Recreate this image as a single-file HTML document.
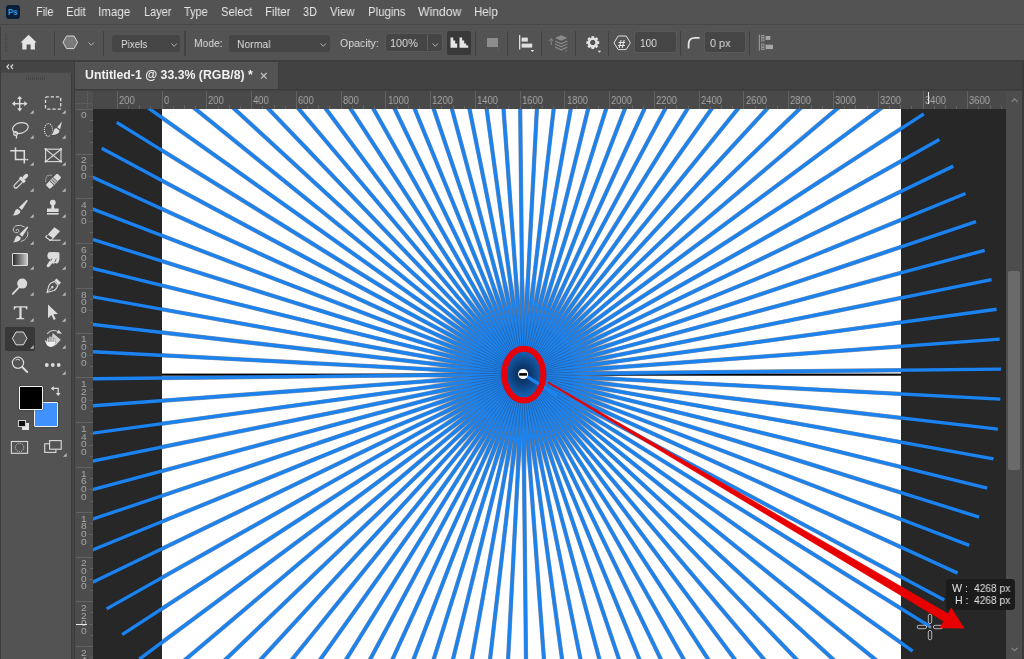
<!DOCTYPE html>
<html><head><meta charset="utf-8"><title>Photoshop</title>
<style>
html,body{margin:0;padding:0;}
body{width:1024px;height:659px;overflow:hidden;background:#535353;position:relative;font-family:"Liberation Sans",sans-serif;}
.t{position:absolute;white-space:nowrap;line-height:20px;transform-origin:0 0;will-change:transform;}
.r{position:absolute;}
svg{position:absolute;overflow:visible;}
</style></head><body>
<div class="r" style="left:0.00px;top:0.00px;width:1024.00px;height:24.00px;background:#535353;"></div>
<div class="r" style="left:0.00px;top:24.00px;width:1024.00px;height:1.30px;background:#474747;"></div>
<div class="r" style="left:0.00px;top:25.50px;width:1024.00px;height:35.00px;background:#535353;"></div>
<div class="r" style="left:0.00px;top:60.00px;width:1024.00px;height:2.00px;background:#3e3e3e;"></div>
<div class="r" style="left:72.00px;top:62.00px;width:952.00px;height:29.00px;background:#424242;"></div>
<div class="r" style="left:0.00px;top:62.00px;width:72.00px;height:597.00px;background:#535353;"></div>
<div class="r" style="left:0.00px;top:25.50px;width:1.10px;height:634.00px;background:#3e3e3e;"></div>
<div class="r" style="left:71.40px;top:62.00px;width:3.20px;height:597.00px;background:#454545;"></div>
<div class="r" style="left:71.40px;top:62.00px;width:0.90px;height:597.00px;background:#3c3c3c;"></div>
<div class="r" style="left:73.70px;top:62.00px;width:0.90px;height:597.00px;background:#3c3c3c;"></div>
<div class="r" style="left:1.00px;top:61.80px;width:70.50px;height:10.40px;background:#444444;"></div>
<div class="r" style="left:1.00px;top:72.20px;width:70.50px;height:0.90px;background:#4a4a4a;"></div>
<div class="r" style="left:75.00px;top:62.30px;width:203.00px;height:26.40px;background:#535353;"></div>
<div class="r" style="left:74.60px;top:88.70px;width:949.40px;height:1.80px;background:#3b3b3b;"></div>
<div class="r" style="left:75.00px;top:90.50px;width:931.00px;height:18.50px;background:#494949;"></div>
<div class="r" style="left:75.00px;top:90.50px;width:18.00px;height:568.50px;background:#4c4c4c;"></div>
<div class="r" style="left:75.00px;top:90.50px;width:18.00px;height:18.50px;background:#4f4f4f;"></div>
<div class="r" style="left:93.00px;top:109.00px;width:913.00px;height:550.00px;background:#272727;"></div>
<div class="r" style="left:162.00px;top:109.00px;width:739.00px;height:550.00px;background:#ffffff;"></div>
<div class="r" style="left:1006.00px;top:90.50px;width:15.50px;height:568.50px;background:#4d4d4d;"></div>
<div class="r" style="left:1021.50px;top:62.00px;width:2.50px;height:597.00px;background:#3a3a3a;"></div>
<div class="r" style="left:1008.00px;top:271.00px;width:12.00px;height:199.00px;background:#6a6a6a;border-radius:2px;"></div>
<div class="t" style="left:35.50px;top:2.23px;font-size:12.60px;color:#e6e6e6;transform:scaleX(0.8619);">File</div>
<div class="t" style="left:66.00px;top:2.23px;font-size:12.60px;color:#e6e6e6;transform:scaleX(0.9096);">Edit</div>
<div class="t" style="left:98.25px;top:2.23px;font-size:12.60px;color:#e6e6e6;transform:scaleX(0.9209);">Image</div>
<div class="t" style="left:143.75px;top:2.23px;font-size:12.60px;color:#e6e6e6;transform:scaleX(0.8725);">Layer</div>
<div class="t" style="left:184.25px;top:2.23px;font-size:12.60px;color:#e6e6e6;transform:scaleX(0.8694);">Type</div>
<div class="t" style="left:221.25px;top:2.23px;font-size:12.60px;color:#e6e6e6;transform:scaleX(0.8923);">Select</div>
<div class="t" style="left:264.75px;top:2.23px;font-size:12.60px;color:#e6e6e6;transform:scaleX(0.9107);">Filter</div>
<div class="t" style="left:302.75px;top:2.23px;font-size:12.60px;color:#e6e6e6;transform:scaleX(0.8692);">3D</div>
<div class="t" style="left:330.25px;top:2.23px;font-size:12.60px;color:#e6e6e6;transform:scaleX(0.9046);">View</div>
<div class="t" style="left:367.75px;top:2.23px;font-size:12.60px;color:#e6e6e6;transform:scaleX(0.9074);">Plugins</div>
<div class="t" style="left:417.75px;top:2.23px;font-size:12.60px;color:#e6e6e6;transform:scaleX(0.9651);">Window</div>
<div class="t" style="left:474.25px;top:2.23px;font-size:12.60px;color:#e6e6e6;transform:scaleX(0.9165);">Help</div>
<div class="r" style="left:6.1px;top:4.9px;width:14.2px;height:13.8px;background:#0b1e36;border-radius:3px;"></div>
<div class="t" style="left:8.40px;top:2.12px;font-size:8.60px;color:#31a8ff;font-weight:bold;transform:scaleX(0.9221);">Ps</div>
<div class="r" style="left:5.10px;top:33.10px;width:2.20px;height:1.00px;background:#454545;"></div>
<div class="r" style="left:5.10px;top:35.10px;width:2.20px;height:1.00px;background:#454545;"></div>
<div class="r" style="left:5.10px;top:37.10px;width:2.20px;height:1.00px;background:#454545;"></div>
<div class="r" style="left:5.10px;top:39.10px;width:2.20px;height:1.00px;background:#454545;"></div>
<div class="r" style="left:5.10px;top:41.10px;width:2.20px;height:1.00px;background:#454545;"></div>
<div class="r" style="left:5.10px;top:43.10px;width:2.20px;height:1.00px;background:#454545;"></div>
<div class="r" style="left:5.10px;top:45.10px;width:2.20px;height:1.00px;background:#454545;"></div>
<div class="r" style="left:5.10px;top:47.10px;width:2.20px;height:1.00px;background:#454545;"></div>
<div class="r" style="left:5.10px;top:49.10px;width:2.20px;height:1.00px;background:#454545;"></div>
<div class="r" style="left:5.10px;top:51.10px;width:2.20px;height:1.00px;background:#454545;"></div>
<svg style="left:20px;top:34px" width="18" height="17" viewBox="0 0 18 17"><path d="M8.6 0.8 L0.6 8.4 L2.3 8.4 L2.3 15.6 L6.6 15.6 L6.6 10.6 L10.6 10.6 L10.6 15.6 L14.9 15.6 L14.9 8.4 L16.6 8.4 Z" fill="#e4e4e4"/></svg>
<div class="r" style="left:53.90px;top:30.50px;width:1.30px;height:25.00px;background:#414141;"></div>
<svg style="left:62px;top:35px" width="17" height="15" viewBox="0 0 17 15"><path d="M4.6 1 L12 1 L15.6 7.3 L12 13.6 L4.6 13.6 L1 7.3 Z" fill="#7a7a7a" stroke="#d8d8d8" stroke-width="1"/></svg>
<svg style="left:88.00px;top:42.00px" width="6.4" height="3.8"><path d="M0.5 0.5 L3.20 3.30 L5.90 0.5" fill="none" stroke="#bcbcbc" stroke-width="0.9"/></svg>
<div class="r" style="left:102.90px;top:30.50px;width:1.30px;height:25.00px;background:#414141;"></div>
<div class="r" style="left:111.50px;top:34.50px;width:68.50px;height:17.50px;background:#454545;border-radius:3px;"></div>
<div class="t" style="left:120.60px;top:33.61px;font-size:11.80px;color:#dcdcdc;transform:scaleX(0.8355);">Pixels</div>
<svg style="left:170.50px;top:42.50px" width="6.4" height="3.8"><path d="M0.5 0.5 L3.20 3.30 L5.90 0.5" fill="none" stroke="#bcbcbc" stroke-width="0.9"/></svg>
<div class="r" style="left:184.40px;top:30.50px;width:1.30px;height:25.00px;background:#414141;"></div>
<div class="t" style="left:193.70px;top:33.21px;font-size:11.80px;color:#dcdcdc;transform:scaleX(0.8720);">Mode:</div>
<div class="r" style="left:229.00px;top:34.50px;width:101.00px;height:17.50px;background:#454545;border-radius:3px;"></div>
<div class="t" style="left:237.10px;top:33.61px;font-size:11.80px;color:#dcdcdc;transform:scaleX(0.8809);">Normal</div>
<svg style="left:320.00px;top:42.50px" width="6.4" height="3.8"><path d="M0.5 0.5 L3.20 3.30 L5.90 0.5" fill="none" stroke="#bcbcbc" stroke-width="0.9"/></svg>
<div class="t" style="left:339.75px;top:33.21px;font-size:11.80px;color:#dcdcdc;transform:scaleX(0.8953);">Opacity:</div>
<div class="r" style="left:386.00px;top:33.80px;width:55.50px;height:17.00px;background:#454545;border-radius:2px;box-shadow:0 0 0 0.6px #5e5e5e;"></div>
<div class="r" style="left:427.00px;top:34.50px;width:0.80px;height:15.60px;background:#606060;"></div>
<div class="t" style="left:390.25px;top:32.91px;font-size:11.80px;color:#dcdcdc;transform:scaleX(0.9195);">100%</div>
<svg style="left:431.50px;top:42.50px" width="6.4" height="3.8"><path d="M0.5 0.5 L3.20 3.30 L5.90 0.5" fill="none" stroke="#bcbcbc" stroke-width="0.9"/></svg>
<div class="r" style="left:447.30px;top:30.50px;width:23.70px;height:24.00px;background:#393939;border-radius:2px;"></div>
<svg style="left:450px;top:37px" width="20" height="12" viewBox="0 0 20 12"><path d="M0.5 0.5 L3.2 0.5 L3.2 3.5 L5.2 3.5 L5.2 6.5 L7.2 6.5 L7.2 10.8 L0.5 10.8 Z M9.5 0.5 L12.2 0.5 L12.2 3.5 L14.2 3.5 L14.2 6.5 L16.2 6.5 L16.2 8.5 L18.2 8.5 L18.2 10.8 L9.5 10.8 Z" fill="#e6e6e6"/></svg>
<div class="r" style="left:475.20px;top:30.50px;width:1.30px;height:25.00px;background:#414141;"></div>
<div class="r" style="left:487.30px;top:37.50px;width:10.70px;height:9.50px;background:#8c8c8c;"></div>
<div class="r" style="left:497.50px;top:49.00px;width:1.60px;height:1.20px;background:#6e6e6e;"></div>
<div class="r" style="left:506.80px;top:30.50px;width:1.30px;height:25.00px;background:#414141;"></div>
<svg style="left:518px;top:34px" width="18" height="20" viewBox="0 0 18 20"><rect x="1" y="1" width="1.3" height="14.5" fill="#e0e0e0"/><rect x="3.6" y="3.6" width="6.2" height="4" fill="#e0e0e0"/><rect x="3.6" y="9.6" width="10.6" height="4" fill="#e0e0e0"/><path d="M12.6 16 L16.2 16 L14.4 18 Z" fill="#e0e0e0"/></svg>
<div class="r" style="left:540.90px;top:30.50px;width:1.30px;height:25.00px;background:#414141;"></div>
<svg style="left:548px;top:34px" width="22" height="20" viewBox="0 0 22 20"><path d="M3.2 4.6 L1.2 7 M3.2 4.6 L5.2 7 M3.2 4.8 L3.2 11" stroke="#8a8a8a" stroke-width="1" fill="none"/><path d="M13.2 1.2 L19.4 4 L13.2 6.8 L7 4 Z" fill="#8a8a8a"/><path d="M7 7 L13.2 9.8 L19.4 7 M7 10 L13.2 12.8 L19.4 10 M7 13 L13.2 15.8 L19.4 13" stroke="#8a8a8a" stroke-width="1.2" fill="none"/><path d="M16.6 16.4 L19.6 16.4 L18.1 18 Z" fill="#777"/></svg>
<div class="r" style="left:574.60px;top:30.50px;width:1.30px;height:25.00px;background:#414141;"></div>
<svg style="left:584px;top:34px" width="20" height="20" viewBox="-9 -8.5 20 20"><g transform="translate(-0.2,0.1) scale(0.92)"><rect x="-1.5" y="-7" width="3" height="4" transform="rotate(0)" fill="#e2e2e2"/><rect x="-1.5" y="-7" width="3" height="4" transform="rotate(45)" fill="#e2e2e2"/><rect x="-1.5" y="-7" width="3" height="4" transform="rotate(90)" fill="#e2e2e2"/><rect x="-1.5" y="-7" width="3" height="4" transform="rotate(135)" fill="#e2e2e2"/><rect x="-1.5" y="-7" width="3" height="4" transform="rotate(180)" fill="#e2e2e2"/><rect x="-1.5" y="-7" width="3" height="4" transform="rotate(225)" fill="#e2e2e2"/><rect x="-1.5" y="-7" width="3" height="4" transform="rotate(270)" fill="#e2e2e2"/><rect x="-1.5" y="-7" width="3" height="4" transform="rotate(315)" fill="#e2e2e2"/><circle r="4.3" fill="none" stroke="#e2e2e2" stroke-width="2.6"/></g><path d="M4.6 8.2 L8.2 8.2 L6.4 10.2 Z" fill="#e2e2e2"/></svg>
<div class="r" style="left:607.60px;top:30.50px;width:1.30px;height:25.00px;background:#414141;"></div>
<svg style="left:613px;top:35px" width="19" height="16" viewBox="0 0 19 16"><path d="M5.2 1 L13.2 1 L17.4 7.8 L13.2 14.6 L5.2 14.6 L1 7.8 Z" fill="none" stroke="#e0e0e0" stroke-width="1"/></svg>
<div class="t" style="left:618.30px;top:33.76px;font-size:10.50px;color:#e6e6e6;font-weight:bold;transform:scaleX(1.2672);">#</div>
<div class="r" style="left:634.60px;top:32.20px;width:41.00px;height:19.60px;background:#454545;border-radius:2px;box-shadow:0 0 0 0.6px #5e5e5e;"></div>
<div class="t" style="left:640.00px;top:32.91px;font-size:11.80px;color:#dcdcdc;transform:scaleX(0.8634);">100</div>
<div class="r" style="left:679.60px;top:30.50px;width:1.30px;height:25.00px;background:#414141;"></div>
<svg style="left:687px;top:36px" width="14" height="14" viewBox="0 0 14 14"><path d="M1.6 12.6 L1.6 8 Q1.6 1.8 8 1.8 L12.6 1.8" fill="none" stroke="#e2e2e2" stroke-width="1.8"/></svg>
<div class="r" style="left:704.60px;top:32.20px;width:40.60px;height:19.60px;background:#454545;border-radius:2px;box-shadow:0 0 0 0.6px #5e5e5e;"></div>
<div class="t" style="left:709.50px;top:32.91px;font-size:11.80px;color:#dcdcdc;transform:scaleX(0.9191);">0 px</div>
<div class="r" style="left:749.00px;top:30.50px;width:1.30px;height:25.00px;background:#414141;"></div>
<svg style="left:757px;top:33px" width="18" height="20" viewBox="0 0 18 20"><rect x="1.8" y="1.8" width="1.1" height="15.8" fill="#9c9c9c"/><g fill="none" stroke="#9a9a9a" stroke-width="0.9"><rect x="4.6" y="2.4" width="2.4" height="2.2"/><rect x="4.6" y="5.8" width="2.4" height="2.2"/><rect x="4.6" y="11" width="2.4" height="2.2"/><rect x="4.6" y="14.4" width="2.4" height="2.2"/></g><rect x="8.6" y="3" width="4.7" height="3.9" fill="#a6a6a6"/><rect x="8.6" y="11.7" width="7.4" height="4.4" fill="#a6a6a6"/></svg>
<div class="t" style="left:85.25px;top:65.07px;font-size:12.20px;color:#f0f0f0;font-weight:bold;transform:scaleX(1.0093);">Untitled-1 @ 33.3% (RGB/8) *</div>
<svg style="left:259.9px;top:72.3px" width="8" height="8" viewBox="0 0 8 8"><path d="M1 1 L6.6 6.6 M6.6 1 L1 6.6" stroke="#c4c4c4" stroke-width="1.25" fill="none"/></svg>
<div class="r" style="left:278.00px;top:62.30px;width:1.30px;height:26.40px;background:#3e3e3e;"></div>
<svg style="left:6.2px;top:63.8px" width="9" height="6" viewBox="0 0 9 6"><path d="M3 0.5 L0.9 2.8 L3 5.1 M7 0.5 L4.9 2.8 L7 5.1" stroke="#dadada" stroke-width="1.2" fill="none"/></svg>
<div class="r" style="left:26.00px;top:76.50px;width:1.00px;height:3.50px;background:#464646;"></div>
<div class="r" style="left:28.00px;top:76.50px;width:1.00px;height:3.50px;background:#464646;"></div>
<div class="r" style="left:30.00px;top:76.50px;width:1.00px;height:3.50px;background:#464646;"></div>
<div class="r" style="left:32.00px;top:76.50px;width:1.00px;height:3.50px;background:#464646;"></div>
<div class="r" style="left:34.00px;top:76.50px;width:1.00px;height:3.50px;background:#464646;"></div>
<div class="r" style="left:36.00px;top:76.50px;width:1.00px;height:3.50px;background:#464646;"></div>
<div class="r" style="left:38.00px;top:76.50px;width:1.00px;height:3.50px;background:#464646;"></div>
<div class="r" style="left:40.00px;top:76.50px;width:1.00px;height:3.50px;background:#464646;"></div>
<div class="r" style="left:42.00px;top:76.50px;width:1.00px;height:3.50px;background:#464646;"></div>
<div class="r" style="left:44.00px;top:76.50px;width:1.00px;height:3.50px;background:#464646;"></div>
<div class="r" style="left:116.84px;top:90.80px;width:0.90px;height:18.20px;background:#626262;"></div>
<div class="t" style="left:118.94px;top:91.20px;font-size:10.40px;color:#a6a6a6;transform:scaleX(0.9076);clip-path:inset(0 0.0px 0 0);">200</div>
<div class="r" style="left:128.03px;top:106.00px;width:0.90px;height:3.00px;background:#626262;"></div>
<div class="r" style="left:139.22px;top:104.50px;width:0.90px;height:4.50px;background:#626262;"></div>
<div class="r" style="left:150.41px;top:106.00px;width:0.90px;height:3.00px;background:#626262;"></div>
<div class="r" style="left:161.60px;top:90.80px;width:0.90px;height:18.20px;background:#626262;"></div>
<div class="t" style="left:163.70px;top:91.20px;font-size:10.40px;color:#a6a6a6;transform:scaleX(0.9076);clip-path:inset(0 0.0px 0 0);">0</div>
<div class="r" style="left:172.79px;top:106.00px;width:0.90px;height:3.00px;background:#626262;"></div>
<div class="r" style="left:183.98px;top:104.50px;width:0.90px;height:4.50px;background:#626262;"></div>
<div class="r" style="left:195.17px;top:106.00px;width:0.90px;height:3.00px;background:#626262;"></div>
<div class="r" style="left:206.36px;top:90.80px;width:0.90px;height:18.20px;background:#626262;"></div>
<div class="t" style="left:208.46px;top:91.20px;font-size:10.40px;color:#a6a6a6;transform:scaleX(0.9076);clip-path:inset(0 0.0px 0 0);">200</div>
<div class="r" style="left:217.55px;top:106.00px;width:0.90px;height:3.00px;background:#626262;"></div>
<div class="r" style="left:228.74px;top:104.50px;width:0.90px;height:4.50px;background:#626262;"></div>
<div class="r" style="left:239.93px;top:106.00px;width:0.90px;height:3.00px;background:#626262;"></div>
<div class="r" style="left:251.12px;top:90.80px;width:0.90px;height:18.20px;background:#626262;"></div>
<div class="t" style="left:253.22px;top:91.20px;font-size:10.40px;color:#a6a6a6;transform:scaleX(0.9076);clip-path:inset(0 0.0px 0 0);">400</div>
<div class="r" style="left:262.31px;top:106.00px;width:0.90px;height:3.00px;background:#626262;"></div>
<div class="r" style="left:273.50px;top:104.50px;width:0.90px;height:4.50px;background:#626262;"></div>
<div class="r" style="left:284.69px;top:106.00px;width:0.90px;height:3.00px;background:#626262;"></div>
<div class="r" style="left:295.88px;top:90.80px;width:0.90px;height:18.20px;background:#626262;"></div>
<div class="t" style="left:297.98px;top:91.20px;font-size:10.40px;color:#a6a6a6;transform:scaleX(0.9076);clip-path:inset(0 0.0px 0 0);">600</div>
<div class="r" style="left:307.07px;top:106.00px;width:0.90px;height:3.00px;background:#626262;"></div>
<div class="r" style="left:318.26px;top:104.50px;width:0.90px;height:4.50px;background:#626262;"></div>
<div class="r" style="left:329.45px;top:106.00px;width:0.90px;height:3.00px;background:#626262;"></div>
<div class="r" style="left:340.64px;top:90.80px;width:0.90px;height:18.20px;background:#626262;"></div>
<div class="t" style="left:342.74px;top:91.20px;font-size:10.40px;color:#a6a6a6;transform:scaleX(0.9076);clip-path:inset(0 0.0px 0 0);">800</div>
<div class="r" style="left:351.83px;top:106.00px;width:0.90px;height:3.00px;background:#626262;"></div>
<div class="r" style="left:363.02px;top:104.50px;width:0.90px;height:4.50px;background:#626262;"></div>
<div class="r" style="left:374.21px;top:106.00px;width:0.90px;height:3.00px;background:#626262;"></div>
<div class="r" style="left:385.40px;top:90.80px;width:0.90px;height:18.20px;background:#626262;"></div>
<div class="t" style="left:387.50px;top:91.20px;font-size:10.40px;color:#a6a6a6;transform:scaleX(0.9076);clip-path:inset(0 0.0px 0 0);">1000</div>
<div class="r" style="left:396.59px;top:106.00px;width:0.90px;height:3.00px;background:#626262;"></div>
<div class="r" style="left:407.78px;top:104.50px;width:0.90px;height:4.50px;background:#626262;"></div>
<div class="r" style="left:418.97px;top:106.00px;width:0.90px;height:3.00px;background:#626262;"></div>
<div class="r" style="left:430.16px;top:90.80px;width:0.90px;height:18.20px;background:#626262;"></div>
<div class="t" style="left:432.26px;top:91.20px;font-size:10.40px;color:#a6a6a6;transform:scaleX(0.9076);clip-path:inset(0 0.0px 0 0);">1200</div>
<div class="r" style="left:441.35px;top:106.00px;width:0.90px;height:3.00px;background:#626262;"></div>
<div class="r" style="left:452.54px;top:104.50px;width:0.90px;height:4.50px;background:#626262;"></div>
<div class="r" style="left:463.73px;top:106.00px;width:0.90px;height:3.00px;background:#626262;"></div>
<div class="r" style="left:474.92px;top:90.80px;width:0.90px;height:18.20px;background:#626262;"></div>
<div class="t" style="left:477.02px;top:91.20px;font-size:10.40px;color:#a6a6a6;transform:scaleX(0.9076);clip-path:inset(0 0.0px 0 0);">1400</div>
<div class="r" style="left:486.11px;top:106.00px;width:0.90px;height:3.00px;background:#626262;"></div>
<div class="r" style="left:497.30px;top:104.50px;width:0.90px;height:4.50px;background:#626262;"></div>
<div class="r" style="left:508.49px;top:106.00px;width:0.90px;height:3.00px;background:#626262;"></div>
<div class="r" style="left:519.68px;top:90.80px;width:0.90px;height:18.20px;background:#626262;"></div>
<div class="t" style="left:521.78px;top:91.20px;font-size:10.40px;color:#a6a6a6;transform:scaleX(0.9076);clip-path:inset(0 0.0px 0 0);">1600</div>
<div class="r" style="left:530.87px;top:106.00px;width:0.90px;height:3.00px;background:#626262;"></div>
<div class="r" style="left:542.06px;top:104.50px;width:0.90px;height:4.50px;background:#626262;"></div>
<div class="r" style="left:553.25px;top:106.00px;width:0.90px;height:3.00px;background:#626262;"></div>
<div class="r" style="left:564.44px;top:90.80px;width:0.90px;height:18.20px;background:#626262;"></div>
<div class="t" style="left:566.54px;top:91.20px;font-size:10.40px;color:#a6a6a6;transform:scaleX(0.9076);clip-path:inset(0 0.0px 0 0);">1800</div>
<div class="r" style="left:575.63px;top:106.00px;width:0.90px;height:3.00px;background:#626262;"></div>
<div class="r" style="left:586.82px;top:104.50px;width:0.90px;height:4.50px;background:#626262;"></div>
<div class="r" style="left:598.01px;top:106.00px;width:0.90px;height:3.00px;background:#626262;"></div>
<div class="r" style="left:609.20px;top:90.80px;width:0.90px;height:18.20px;background:#626262;"></div>
<div class="t" style="left:611.30px;top:91.20px;font-size:10.40px;color:#a6a6a6;transform:scaleX(0.9076);clip-path:inset(0 0.0px 0 0);">2000</div>
<div class="r" style="left:620.39px;top:106.00px;width:0.90px;height:3.00px;background:#626262;"></div>
<div class="r" style="left:631.58px;top:104.50px;width:0.90px;height:4.50px;background:#626262;"></div>
<div class="r" style="left:642.77px;top:106.00px;width:0.90px;height:3.00px;background:#626262;"></div>
<div class="r" style="left:653.96px;top:90.80px;width:0.90px;height:18.20px;background:#626262;"></div>
<div class="t" style="left:656.06px;top:91.20px;font-size:10.40px;color:#a6a6a6;transform:scaleX(0.9076);clip-path:inset(0 0.0px 0 0);">2200</div>
<div class="r" style="left:665.15px;top:106.00px;width:0.90px;height:3.00px;background:#626262;"></div>
<div class="r" style="left:676.34px;top:104.50px;width:0.90px;height:4.50px;background:#626262;"></div>
<div class="r" style="left:687.53px;top:106.00px;width:0.90px;height:3.00px;background:#626262;"></div>
<div class="r" style="left:698.72px;top:90.80px;width:0.90px;height:18.20px;background:#626262;"></div>
<div class="t" style="left:700.82px;top:91.20px;font-size:10.40px;color:#a6a6a6;transform:scaleX(0.9076);clip-path:inset(0 0.0px 0 0);">2400</div>
<div class="r" style="left:709.91px;top:106.00px;width:0.90px;height:3.00px;background:#626262;"></div>
<div class="r" style="left:721.10px;top:104.50px;width:0.90px;height:4.50px;background:#626262;"></div>
<div class="r" style="left:732.29px;top:106.00px;width:0.90px;height:3.00px;background:#626262;"></div>
<div class="r" style="left:743.48px;top:90.80px;width:0.90px;height:18.20px;background:#626262;"></div>
<div class="t" style="left:745.58px;top:91.20px;font-size:10.40px;color:#a6a6a6;transform:scaleX(0.9076);clip-path:inset(0 0.0px 0 0);">2600</div>
<div class="r" style="left:754.67px;top:106.00px;width:0.90px;height:3.00px;background:#626262;"></div>
<div class="r" style="left:765.86px;top:104.50px;width:0.90px;height:4.50px;background:#626262;"></div>
<div class="r" style="left:777.05px;top:106.00px;width:0.90px;height:3.00px;background:#626262;"></div>
<div class="r" style="left:788.24px;top:90.80px;width:0.90px;height:18.20px;background:#626262;"></div>
<div class="t" style="left:790.34px;top:91.20px;font-size:10.40px;color:#a6a6a6;transform:scaleX(0.9076);clip-path:inset(0 0.0px 0 0);">2800</div>
<div class="r" style="left:799.43px;top:106.00px;width:0.90px;height:3.00px;background:#626262;"></div>
<div class="r" style="left:810.62px;top:104.50px;width:0.90px;height:4.50px;background:#626262;"></div>
<div class="r" style="left:821.81px;top:106.00px;width:0.90px;height:3.00px;background:#626262;"></div>
<div class="r" style="left:833.00px;top:90.80px;width:0.90px;height:18.20px;background:#626262;"></div>
<div class="t" style="left:835.10px;top:91.20px;font-size:10.40px;color:#a6a6a6;transform:scaleX(0.9076);clip-path:inset(0 0.0px 0 0);">3000</div>
<div class="r" style="left:844.19px;top:106.00px;width:0.90px;height:3.00px;background:#626262;"></div>
<div class="r" style="left:855.38px;top:104.50px;width:0.90px;height:4.50px;background:#626262;"></div>
<div class="r" style="left:866.57px;top:106.00px;width:0.90px;height:3.00px;background:#626262;"></div>
<div class="r" style="left:877.76px;top:90.80px;width:0.90px;height:18.20px;background:#626262;"></div>
<div class="t" style="left:879.86px;top:91.20px;font-size:10.40px;color:#a6a6a6;transform:scaleX(0.9076);clip-path:inset(0 0.0px 0 0);">3200</div>
<div class="r" style="left:888.95px;top:106.00px;width:0.90px;height:3.00px;background:#626262;"></div>
<div class="r" style="left:900.14px;top:104.50px;width:0.90px;height:4.50px;background:#626262;"></div>
<div class="r" style="left:911.33px;top:106.00px;width:0.90px;height:3.00px;background:#626262;"></div>
<div class="r" style="left:922.52px;top:90.80px;width:0.90px;height:18.20px;background:#626262;"></div>
<div class="t" style="left:924.62px;top:91.20px;font-size:10.40px;color:#a6a6a6;transform:scaleX(0.9076);clip-path:inset(0 0.0px 0 0);">3400</div>
<div class="r" style="left:933.71px;top:106.00px;width:0.90px;height:3.00px;background:#626262;"></div>
<div class="r" style="left:944.90px;top:104.50px;width:0.90px;height:4.50px;background:#626262;"></div>
<div class="r" style="left:956.09px;top:106.00px;width:0.90px;height:3.00px;background:#626262;"></div>
<div class="r" style="left:967.28px;top:90.80px;width:0.90px;height:18.20px;background:#626262;"></div>
<div class="t" style="left:969.38px;top:91.20px;font-size:10.40px;color:#a6a6a6;transform:scaleX(0.9076);clip-path:inset(0 0.0px 0 0);">3600</div>
<div class="r" style="left:978.47px;top:106.00px;width:0.90px;height:3.00px;background:#626262;"></div>
<div class="r" style="left:989.66px;top:104.50px;width:0.90px;height:4.50px;background:#626262;"></div>
<div class="r" style="left:1000.85px;top:106.00px;width:0.90px;height:3.00px;background:#626262;"></div>
<div class="r" style="left:75.50px;top:108.90px;width:17.50px;height:0.90px;background:#626262;"></div>
<div class="t" style="left:80.70px;top:104.87px;font-size:9.90px;color:#a6a6a6;transform:scaleX(1.0352);">0</div>
<div class="r" style="left:90.00px;top:120.09px;width:3.00px;height:0.90px;background:#626262;"></div>
<div class="r" style="left:88.50px;top:131.28px;width:4.50px;height:0.90px;background:#626262;"></div>
<div class="r" style="left:90.00px;top:142.47px;width:3.00px;height:0.90px;background:#626262;"></div>
<div class="r" style="left:75.50px;top:153.66px;width:17.50px;height:0.90px;background:#626262;"></div>
<div class="t" style="left:80.70px;top:150.43px;font-size:9.90px;color:#a6a6a6;transform:scaleX(1.0352);">2</div>
<div class="t" style="left:80.70px;top:158.13px;font-size:9.90px;color:#a6a6a6;transform:scaleX(1.0352);">0</div>
<div class="t" style="left:80.70px;top:165.83px;font-size:9.90px;color:#a6a6a6;transform:scaleX(1.0352);">0</div>
<div class="r" style="left:90.00px;top:164.85px;width:3.00px;height:0.90px;background:#626262;"></div>
<div class="r" style="left:88.50px;top:176.04px;width:4.50px;height:0.90px;background:#626262;"></div>
<div class="r" style="left:90.00px;top:187.23px;width:3.00px;height:0.90px;background:#626262;"></div>
<div class="r" style="left:75.50px;top:198.42px;width:17.50px;height:0.90px;background:#626262;"></div>
<div class="t" style="left:80.70px;top:195.19px;font-size:9.90px;color:#a6a6a6;transform:scaleX(1.0352);">4</div>
<div class="t" style="left:80.70px;top:202.89px;font-size:9.90px;color:#a6a6a6;transform:scaleX(1.0352);">0</div>
<div class="t" style="left:80.70px;top:210.59px;font-size:9.90px;color:#a6a6a6;transform:scaleX(1.0352);">0</div>
<div class="r" style="left:90.00px;top:209.61px;width:3.00px;height:0.90px;background:#626262;"></div>
<div class="r" style="left:88.50px;top:220.80px;width:4.50px;height:0.90px;background:#626262;"></div>
<div class="r" style="left:90.00px;top:231.99px;width:3.00px;height:0.90px;background:#626262;"></div>
<div class="r" style="left:75.50px;top:243.18px;width:17.50px;height:0.90px;background:#626262;"></div>
<div class="t" style="left:80.70px;top:239.95px;font-size:9.90px;color:#a6a6a6;transform:scaleX(1.0352);">6</div>
<div class="t" style="left:80.70px;top:247.65px;font-size:9.90px;color:#a6a6a6;transform:scaleX(1.0352);">0</div>
<div class="t" style="left:80.70px;top:255.35px;font-size:9.90px;color:#a6a6a6;transform:scaleX(1.0352);">0</div>
<div class="r" style="left:90.00px;top:254.37px;width:3.00px;height:0.90px;background:#626262;"></div>
<div class="r" style="left:88.50px;top:265.56px;width:4.50px;height:0.90px;background:#626262;"></div>
<div class="r" style="left:90.00px;top:276.75px;width:3.00px;height:0.90px;background:#626262;"></div>
<div class="r" style="left:75.50px;top:287.94px;width:17.50px;height:0.90px;background:#626262;"></div>
<div class="t" style="left:80.70px;top:284.71px;font-size:9.90px;color:#a6a6a6;transform:scaleX(1.0352);">8</div>
<div class="t" style="left:80.70px;top:292.41px;font-size:9.90px;color:#a6a6a6;transform:scaleX(1.0352);">0</div>
<div class="t" style="left:80.70px;top:300.11px;font-size:9.90px;color:#a6a6a6;transform:scaleX(1.0352);">0</div>
<div class="r" style="left:90.00px;top:299.13px;width:3.00px;height:0.90px;background:#626262;"></div>
<div class="r" style="left:88.50px;top:310.32px;width:4.50px;height:0.90px;background:#626262;"></div>
<div class="r" style="left:90.00px;top:321.51px;width:3.00px;height:0.90px;background:#626262;"></div>
<div class="r" style="left:75.50px;top:332.70px;width:17.50px;height:0.90px;background:#626262;"></div>
<div class="t" style="left:80.70px;top:329.47px;font-size:9.90px;color:#a6a6a6;transform:scaleX(1.0352);">1</div>
<div class="t" style="left:80.70px;top:337.17px;font-size:9.90px;color:#a6a6a6;transform:scaleX(1.0352);">0</div>
<div class="t" style="left:80.70px;top:344.87px;font-size:9.90px;color:#a6a6a6;transform:scaleX(1.0352);">0</div>
<div class="t" style="left:80.70px;top:352.57px;font-size:9.90px;color:#a6a6a6;transform:scaleX(1.0352);">0</div>
<div class="r" style="left:90.00px;top:343.89px;width:3.00px;height:0.90px;background:#626262;"></div>
<div class="r" style="left:88.50px;top:355.08px;width:4.50px;height:0.90px;background:#626262;"></div>
<div class="r" style="left:90.00px;top:366.27px;width:3.00px;height:0.90px;background:#626262;"></div>
<div class="r" style="left:75.50px;top:377.46px;width:17.50px;height:0.90px;background:#626262;"></div>
<div class="t" style="left:80.70px;top:374.23px;font-size:9.90px;color:#a6a6a6;transform:scaleX(1.0352);">1</div>
<div class="t" style="left:80.70px;top:381.93px;font-size:9.90px;color:#a6a6a6;transform:scaleX(1.0352);">2</div>
<div class="t" style="left:80.70px;top:389.63px;font-size:9.90px;color:#a6a6a6;transform:scaleX(1.0352);">0</div>
<div class="t" style="left:80.70px;top:397.33px;font-size:9.90px;color:#a6a6a6;transform:scaleX(1.0352);">0</div>
<div class="r" style="left:90.00px;top:388.65px;width:3.00px;height:0.90px;background:#626262;"></div>
<div class="r" style="left:88.50px;top:399.84px;width:4.50px;height:0.90px;background:#626262;"></div>
<div class="r" style="left:90.00px;top:411.03px;width:3.00px;height:0.90px;background:#626262;"></div>
<div class="r" style="left:75.50px;top:422.22px;width:17.50px;height:0.90px;background:#626262;"></div>
<div class="t" style="left:80.70px;top:418.99px;font-size:9.90px;color:#a6a6a6;transform:scaleX(1.0352);">1</div>
<div class="t" style="left:80.70px;top:426.69px;font-size:9.90px;color:#a6a6a6;transform:scaleX(1.0352);">4</div>
<div class="t" style="left:80.70px;top:434.39px;font-size:9.90px;color:#a6a6a6;transform:scaleX(1.0352);">0</div>
<div class="t" style="left:80.70px;top:442.09px;font-size:9.90px;color:#a6a6a6;transform:scaleX(1.0352);">0</div>
<div class="r" style="left:90.00px;top:433.41px;width:3.00px;height:0.90px;background:#626262;"></div>
<div class="r" style="left:88.50px;top:444.60px;width:4.50px;height:0.90px;background:#626262;"></div>
<div class="r" style="left:90.00px;top:455.79px;width:3.00px;height:0.90px;background:#626262;"></div>
<div class="r" style="left:75.50px;top:466.98px;width:17.50px;height:0.90px;background:#626262;"></div>
<div class="t" style="left:80.70px;top:463.75px;font-size:9.90px;color:#a6a6a6;transform:scaleX(1.0352);">1</div>
<div class="t" style="left:80.70px;top:471.45px;font-size:9.90px;color:#a6a6a6;transform:scaleX(1.0352);">6</div>
<div class="t" style="left:80.70px;top:479.15px;font-size:9.90px;color:#a6a6a6;transform:scaleX(1.0352);">0</div>
<div class="t" style="left:80.70px;top:486.85px;font-size:9.90px;color:#a6a6a6;transform:scaleX(1.0352);">0</div>
<div class="r" style="left:90.00px;top:478.17px;width:3.00px;height:0.90px;background:#626262;"></div>
<div class="r" style="left:88.50px;top:489.36px;width:4.50px;height:0.90px;background:#626262;"></div>
<div class="r" style="left:90.00px;top:500.55px;width:3.00px;height:0.90px;background:#626262;"></div>
<div class="r" style="left:75.50px;top:511.74px;width:17.50px;height:0.90px;background:#626262;"></div>
<div class="t" style="left:80.70px;top:508.51px;font-size:9.90px;color:#a6a6a6;transform:scaleX(1.0352);">1</div>
<div class="t" style="left:80.70px;top:516.21px;font-size:9.90px;color:#a6a6a6;transform:scaleX(1.0352);">8</div>
<div class="t" style="left:80.70px;top:523.91px;font-size:9.90px;color:#a6a6a6;transform:scaleX(1.0352);">0</div>
<div class="t" style="left:80.70px;top:531.61px;font-size:9.90px;color:#a6a6a6;transform:scaleX(1.0352);">0</div>
<div class="r" style="left:90.00px;top:522.93px;width:3.00px;height:0.90px;background:#626262;"></div>
<div class="r" style="left:88.50px;top:534.12px;width:4.50px;height:0.90px;background:#626262;"></div>
<div class="r" style="left:90.00px;top:545.31px;width:3.00px;height:0.90px;background:#626262;"></div>
<div class="r" style="left:75.50px;top:556.50px;width:17.50px;height:0.90px;background:#626262;"></div>
<div class="t" style="left:80.70px;top:553.27px;font-size:9.90px;color:#a6a6a6;transform:scaleX(1.0352);">2</div>
<div class="t" style="left:80.70px;top:560.97px;font-size:9.90px;color:#a6a6a6;transform:scaleX(1.0352);">0</div>
<div class="t" style="left:80.70px;top:568.67px;font-size:9.90px;color:#a6a6a6;transform:scaleX(1.0352);">0</div>
<div class="t" style="left:80.70px;top:576.37px;font-size:9.90px;color:#a6a6a6;transform:scaleX(1.0352);">0</div>
<div class="r" style="left:90.00px;top:567.69px;width:3.00px;height:0.90px;background:#626262;"></div>
<div class="r" style="left:88.50px;top:578.88px;width:4.50px;height:0.90px;background:#626262;"></div>
<div class="r" style="left:90.00px;top:590.07px;width:3.00px;height:0.90px;background:#626262;"></div>
<div class="r" style="left:75.50px;top:601.26px;width:17.50px;height:0.90px;background:#626262;"></div>
<div class="t" style="left:80.70px;top:598.03px;font-size:9.90px;color:#a6a6a6;transform:scaleX(1.0352);">2</div>
<div class="t" style="left:80.70px;top:605.73px;font-size:9.90px;color:#a6a6a6;transform:scaleX(1.0352);">2</div>
<div class="t" style="left:80.70px;top:613.43px;font-size:9.90px;color:#a6a6a6;transform:scaleX(1.0352);">0</div>
<div class="t" style="left:80.70px;top:621.13px;font-size:9.90px;color:#a6a6a6;transform:scaleX(1.0352);">0</div>
<div class="r" style="left:90.00px;top:612.45px;width:3.00px;height:0.90px;background:#626262;"></div>
<div class="r" style="left:88.50px;top:623.64px;width:4.50px;height:0.90px;background:#626262;"></div>
<div class="r" style="left:90.00px;top:634.83px;width:3.00px;height:0.90px;background:#626262;"></div>
<div class="r" style="left:75.50px;top:646.02px;width:17.50px;height:0.90px;background:#626262;"></div>
<div class="t" style="left:80.70px;top:642.79px;font-size:9.90px;color:#a6a6a6;transform:scaleX(1.0352);">2</div>
<div class="t" style="left:80.70px;top:650.49px;font-size:9.90px;color:#a6a6a6;transform:scaleX(1.0352);">4</div>
<div class="r" style="left:90.00px;top:657.21px;width:3.00px;height:0.90px;background:#626262;"></div>
<svg style="left:75px;top:91px" width="18" height="18" viewBox="0 0 18 18"><path d="M12.5 0 L12.5 18 M0 12.5 L18 12.5" stroke="#6a6a6a" stroke-width="0.8" stroke-dasharray="1.5 1.5" fill="none"/></svg>
<div class="r" style="left:928.00px;top:92.00px;width:1.10px;height:11.80px;background:#e8e8e8;"></div>
<div class="r" style="left:76.00px;top:624.40px;width:11.00px;height:1.10px;background:#e8e8e8;"></div>
<svg style="left:1011.4px;top:98.4px" width="8" height="5"><path d="M0.6 3.8 L3.6 0.8 L6.6 3.8" stroke="#8a8a8a" stroke-width="1.1" fill="none"/></svg>
<svg style="left:1011.4px;top:646.6px" width="8" height="5"><path d="M0.6 0.8 L3.6 3.8 L6.6 0.8" stroke="#8a8a8a" stroke-width="1.1" fill="none"/></svg>
<svg style="left:93px;top:109px;" width="913" height="550" viewBox="93 109 913 550"><defs><clipPath id="cv"><rect x="93" y="109" width="913" height="550"/></clipPath><radialGradient id="cg" cx="0.5" cy="0.5" r="0.5"><stop offset="0" stop-color="#08264c"/><stop offset="0.3" stop-color="#0c3a70"/><stop offset="0.75" stop-color="#1560b4"/><stop offset="1" stop-color="#1c83ee" stop-opacity="0"/></radialGradient><radialGradient id="ug" gradientUnits="userSpaceOnUse" cx="523.0" cy="374.2" r="100"><stop offset="0" stop-color="#2462a8"/><stop offset="0.5" stop-color="#2a62a2"/><stop offset="0.64" stop-color="#657a92"/><stop offset="0.8" stop-color="#b8bcc0"/><stop offset="0.97" stop-color="#ffffff"/></radialGradient><radialGradient id="tg" gradientUnits="userSpaceOnUse" cx="523.0" cy="374.2" r="90"><stop offset="0.2" stop-color="#1560b2"/><stop offset="0.55" stop-color="#2c62a0"/><stop offset="0.72" stop-color="#70809a" stop-opacity="0.9"/><stop offset="0.88" stop-color="#a0a6ae" stop-opacity="0.5"/><stop offset="1" stop-color="#c0c0c0" stop-opacity="0"/></radialGradient><linearGradient id="rg" x1="0" y1="0" x2="1" y2="0"><stop offset="0" stop-color="#e00000"/><stop offset="1" stop-color="#ee0000"/></linearGradient></defs><g clip-path="url(#cv)"><circle cx="523.0" cy="374.2" r="100" fill="url(#ug)"/><rect x="162" y="373.6" width="739" height="2.1" fill="#000"/><path d="M523.00 374.20L929.27 626.05M523.00 374.20L912.66 651.06M523.00 374.20L894.50 674.98M523.00 374.20L874.88 697.72M523.00 374.20L853.88 719.17M523.00 374.20L831.56 739.27M523.00 374.20L808.03 757.92M523.00 374.20L783.37 775.06M523.00 374.20L757.69 790.62M523.00 374.20L731.08 804.53M523.00 374.20L703.65 816.75M523.00 374.20L675.50 827.22M523.00 374.20L646.76 835.90M523.00 374.20L617.52 842.76M523.00 374.20L587.91 847.77M523.00 374.20L558.05 850.91M523.00 374.20L528.05 852.17M523.00 374.20L498.03 851.55M523.00 374.20L468.10 849.04M523.00 374.20L438.40 844.65M523.00 374.20L409.02 838.41M523.00 374.20L380.10 830.34M523.00 374.20L351.74 820.47M523.00 374.20L324.06 808.83M523.00 374.20L297.16 795.48M523.00 374.20L271.15 780.47M523.00 374.20L246.14 763.86M523.00 374.20L222.22 745.70M523.00 374.20L199.48 726.08M523.00 374.20L178.03 705.08M523.00 374.20L157.93 682.76M523.00 374.20L139.28 659.23M523.00 374.20L122.14 634.57M523.00 374.20L106.58 608.89M523.00 374.20L92.67 582.28M523.00 374.20L80.45 554.85M523.00 374.20L69.98 526.70M523.00 374.20L61.30 497.96M523.00 374.20L54.44 468.72M523.00 374.20L49.43 439.11M523.00 374.20L46.29 409.25M523.00 374.20L45.03 379.25M523.00 374.20L45.65 349.23M523.00 374.20L48.16 319.30M523.00 374.20L52.55 289.60M523.00 374.20L58.79 260.22M523.00 374.20L66.86 231.30M523.00 374.20L76.73 202.94M523.00 374.20L88.37 175.26M523.00 374.20L101.72 148.36M523.00 374.20L116.73 122.35M523.00 374.20L133.34 97.34M523.00 374.20L151.50 73.42M523.00 374.20L171.12 50.68M523.00 374.20L192.12 29.23M523.00 374.20L214.44 9.13M523.00 374.20L237.97 -9.52M523.00 374.20L262.63 -26.66M523.00 374.20L288.31 -42.22M523.00 374.20L314.92 -56.13M523.00 374.20L342.35 -68.35M523.00 374.20L370.50 -78.82M523.00 374.20L399.24 -87.50M523.00 374.20L428.48 -94.36M523.00 374.20L458.09 -99.37M523.00 374.20L487.95 -102.51M523.00 374.20L517.95 -103.77M523.00 374.20L547.97 -103.15M523.00 374.20L577.90 -100.64M523.00 374.20L607.60 -96.25M523.00 374.20L636.98 -90.01M523.00 374.20L665.90 -81.94M523.00 374.20L694.26 -72.07M523.00 374.20L721.94 -60.43M523.00 374.20L748.84 -47.08M523.00 374.20L774.85 -32.07M523.00 374.20L799.86 -15.46M523.00 374.20L823.78 2.70M523.00 374.20L846.52 22.32M523.00 374.20L867.97 43.32M523.00 374.20L888.07 65.64M523.00 374.20L906.72 89.17M523.00 374.20L923.86 113.83M523.00 374.20L939.42 139.51M523.00 374.20L953.33 166.12M523.00 374.20L965.55 193.55M523.00 374.20L976.02 221.70M523.00 374.20L984.70 250.44M523.00 374.20L991.56 279.68M523.00 374.20L996.57 309.29M523.00 374.20L999.71 339.15M523.00 374.20L1000.97 369.15M523.00 374.20L1000.35 399.17M523.00 374.20L997.84 429.10M523.00 374.20L993.45 458.80M523.00 374.20L987.21 488.18M523.00 374.20L979.14 517.10M523.00 374.20L969.27 545.46M523.00 374.20L957.63 573.14M523.00 374.20L944.28 600.04" stroke="rgba(22,42,78,0.5)" stroke-width="4.3" fill="none"/><path d="M523.00 374.20L929.27 626.05M523.00 374.20L912.66 651.06M523.00 374.20L894.50 674.98M523.00 374.20L874.88 697.72M523.00 374.20L853.88 719.17M523.00 374.20L831.56 739.27M523.00 374.20L808.03 757.92M523.00 374.20L783.37 775.06M523.00 374.20L757.69 790.62M523.00 374.20L731.08 804.53M523.00 374.20L703.65 816.75M523.00 374.20L675.50 827.22M523.00 374.20L646.76 835.90M523.00 374.20L617.52 842.76M523.00 374.20L587.91 847.77M523.00 374.20L558.05 850.91M523.00 374.20L528.05 852.17M523.00 374.20L498.03 851.55M523.00 374.20L468.10 849.04M523.00 374.20L438.40 844.65M523.00 374.20L409.02 838.41M523.00 374.20L380.10 830.34M523.00 374.20L351.74 820.47M523.00 374.20L324.06 808.83M523.00 374.20L297.16 795.48M523.00 374.20L271.15 780.47M523.00 374.20L246.14 763.86M523.00 374.20L222.22 745.70M523.00 374.20L199.48 726.08M523.00 374.20L178.03 705.08M523.00 374.20L157.93 682.76M523.00 374.20L139.28 659.23M523.00 374.20L122.14 634.57M523.00 374.20L106.58 608.89M523.00 374.20L92.67 582.28M523.00 374.20L80.45 554.85M523.00 374.20L69.98 526.70M523.00 374.20L61.30 497.96M523.00 374.20L54.44 468.72M523.00 374.20L49.43 439.11M523.00 374.20L46.29 409.25M523.00 374.20L45.03 379.25M523.00 374.20L45.65 349.23M523.00 374.20L48.16 319.30M523.00 374.20L52.55 289.60M523.00 374.20L58.79 260.22M523.00 374.20L66.86 231.30M523.00 374.20L76.73 202.94M523.00 374.20L88.37 175.26M523.00 374.20L101.72 148.36M523.00 374.20L116.73 122.35M523.00 374.20L133.34 97.34M523.00 374.20L151.50 73.42M523.00 374.20L171.12 50.68M523.00 374.20L192.12 29.23M523.00 374.20L214.44 9.13M523.00 374.20L237.97 -9.52M523.00 374.20L262.63 -26.66M523.00 374.20L288.31 -42.22M523.00 374.20L314.92 -56.13M523.00 374.20L342.35 -68.35M523.00 374.20L370.50 -78.82M523.00 374.20L399.24 -87.50M523.00 374.20L428.48 -94.36M523.00 374.20L458.09 -99.37M523.00 374.20L487.95 -102.51M523.00 374.20L517.95 -103.77M523.00 374.20L547.97 -103.15M523.00 374.20L577.90 -100.64M523.00 374.20L607.60 -96.25M523.00 374.20L636.98 -90.01M523.00 374.20L665.90 -81.94M523.00 374.20L694.26 -72.07M523.00 374.20L721.94 -60.43M523.00 374.20L748.84 -47.08M523.00 374.20L774.85 -32.07M523.00 374.20L799.86 -15.46M523.00 374.20L823.78 2.70M523.00 374.20L846.52 22.32M523.00 374.20L867.97 43.32M523.00 374.20L888.07 65.64M523.00 374.20L906.72 89.17M523.00 374.20L923.86 113.83M523.00 374.20L939.42 139.51M523.00 374.20L953.33 166.12M523.00 374.20L965.55 193.55M523.00 374.20L976.02 221.70M523.00 374.20L984.70 250.44M523.00 374.20L991.56 279.68M523.00 374.20L996.57 309.29M523.00 374.20L999.71 339.15M523.00 374.20L1000.97 369.15M523.00 374.20L1000.35 399.17M523.00 374.20L997.84 429.10M523.00 374.20L993.45 458.80M523.00 374.20L987.21 488.18M523.00 374.20L979.14 517.10M523.00 374.20L969.27 545.46M523.00 374.20L957.63 573.14M523.00 374.20L944.28 600.04" stroke="#1c83ee" stroke-width="3.4" fill="none"/><path d="M540.49 385.82L597.97 424.00M539.73 386.90L594.69 428.61M538.90 387.92L591.13 433.00M538.01 388.89L587.31 437.16M537.05 389.80L583.23 441.08M536.05 390.66L578.91 444.73M534.99 391.44L574.37 448.10M533.88 392.16L569.63 451.18M532.73 392.81L564.70 453.95M531.54 393.38L559.61 456.42M530.32 393.88L554.38 458.55M529.07 394.30L549.02 460.36M527.80 394.64L543.56 461.82M526.50 394.91L538.02 462.94M525.20 395.08L532.42 463.71M523.88 395.18L526.78 464.12M522.56 395.20L521.12 464.18M521.24 395.13L515.48 463.89M519.93 394.97L509.86 463.24M518.64 394.74L504.30 462.23M517.35 394.43L498.81 460.89M516.10 394.03L493.41 459.20M514.86 393.56L488.13 457.17M513.66 393.01L482.99 454.82M512.50 392.39L478.01 452.15M511.38 391.69L473.20 449.17M510.30 390.93L468.59 445.89M509.28 390.10L464.20 442.33M508.31 389.21L460.04 438.51M507.40 388.25L456.12 434.43M506.54 387.25L452.47 430.11M505.76 386.19L449.10 425.57M505.04 385.08L446.02 420.83M504.39 383.93L443.25 415.90M503.82 382.74L440.78 410.81M503.32 381.52L438.65 405.58M502.90 380.27L436.84 400.22M502.56 379.00L435.38 394.76M502.29 377.70L434.26 389.22M502.12 376.40L433.49 383.62M502.02 375.08L433.08 377.98M502.00 373.76L433.02 372.32M502.07 372.44L433.31 366.68M502.23 371.13L433.96 361.06M502.46 369.84L434.97 355.50M502.77 368.55L436.31 350.01M503.17 367.30L438.00 344.61M503.64 366.06L440.03 339.33M504.19 364.86L442.38 334.19M504.81 363.70L445.05 329.21M505.51 362.58L448.03 324.40M506.27 361.50L451.31 319.79M507.10 360.48L454.87 315.40M507.99 359.51L458.69 311.24M508.95 358.60L462.77 307.32M509.95 357.74L467.09 303.67M511.01 356.96L471.63 300.30M512.12 356.24L476.37 297.22M513.27 355.59L481.30 294.45M514.46 355.02L486.39 291.98M515.68 354.52L491.62 289.85M516.93 354.10L496.98 288.04M518.20 353.76L502.44 286.58M519.50 353.49L507.98 285.46M520.80 353.32L513.58 284.69M522.12 353.22L519.22 284.28M523.44 353.20L524.88 284.22M524.76 353.27L530.52 284.51M526.07 353.43L536.14 285.16M527.36 353.66L541.70 286.17M528.65 353.97L547.19 287.51M529.90 354.37L552.59 289.20M531.14 354.84L557.87 291.23M532.34 355.39L563.01 293.58M533.50 356.01L567.99 296.25M534.62 356.71L572.80 299.23M535.70 357.47L577.41 302.51M536.72 358.30L581.80 306.07M537.69 359.19L585.96 309.89M538.60 360.15L589.88 313.97M539.46 361.15L593.53 318.29M540.24 362.21L596.90 322.83M540.96 363.32L599.98 327.57M541.61 364.47L602.75 332.50M542.18 365.66L605.22 337.59M542.68 366.88L607.35 342.82M543.10 368.13L609.16 348.18M543.44 369.40L610.62 353.64M543.71 370.70L611.74 359.18M543.88 372.00L612.51 364.78M543.98 373.32L612.92 370.42M544.00 374.64L612.98 376.08M543.93 375.96L612.69 381.72M543.77 377.27L612.04 387.34M543.54 378.56L611.03 392.90M543.23 379.85L609.69 398.39M542.83 381.10L608.00 403.79M542.36 382.34L605.97 409.07M541.81 383.54L603.62 414.21M541.19 384.70L600.95 419.19" stroke="url(#tg)" stroke-width="0.85" fill="none"/><ellipse cx="523.0" cy="374.2" rx="27" ry="30" fill="url(#cg)"/><path d="M523.00 374.20L557.00 395.28" stroke="#1c83ee" stroke-width="3.3"/><circle cx="523.1" cy="374.1" r="5" fill="#fff"/><rect x="519.2" y="373.1" width="7.8" height="2.6" fill="#000"/></g></svg>
<div class="r" style="left:5.20px;top:327.20px;width:30.20px;height:23.40px;background:#383838;border-radius:2px;"></div>
<svg style="left:29.50px;top:109.50px" width="4" height="4"><path d="M3.7 0 L3.7 3.7 L0 3.7 Z" fill="#b8b8b8"/></svg>
<svg style="left:62.30px;top:109.50px" width="4" height="4"><path d="M3.7 0 L3.7 3.7 L0 3.7 Z" fill="#b8b8b8"/></svg>
<svg style="left:29.50px;top:135.20px" width="4" height="4"><path d="M3.7 0 L3.7 3.7 L0 3.7 Z" fill="#b8b8b8"/></svg>
<svg style="left:62.30px;top:135.20px" width="4" height="4"><path d="M3.7 0 L3.7 3.7 L0 3.7 Z" fill="#b8b8b8"/></svg>
<svg style="left:29.50px;top:161.50px" width="4" height="4"><path d="M3.7 0 L3.7 3.7 L0 3.7 Z" fill="#b8b8b8"/></svg>
<svg style="left:62.30px;top:161.50px" width="4" height="4"><path d="M3.7 0 L3.7 3.7 L0 3.7 Z" fill="#b8b8b8"/></svg>
<svg style="left:29.50px;top:187.50px" width="4" height="4"><path d="M3.7 0 L3.7 3.7 L0 3.7 Z" fill="#b8b8b8"/></svg>
<svg style="left:62.30px;top:187.50px" width="4" height="4"><path d="M3.7 0 L3.7 3.7 L0 3.7 Z" fill="#b8b8b8"/></svg>
<svg style="left:29.50px;top:213.80px" width="4" height="4"><path d="M3.7 0 L3.7 3.7 L0 3.7 Z" fill="#b8b8b8"/></svg>
<svg style="left:62.30px;top:213.80px" width="4" height="4"><path d="M3.7 0 L3.7 3.7 L0 3.7 Z" fill="#b8b8b8"/></svg>
<svg style="left:29.50px;top:240.50px" width="4" height="4"><path d="M3.7 0 L3.7 3.7 L0 3.7 Z" fill="#b8b8b8"/></svg>
<svg style="left:62.30px;top:240.50px" width="4" height="4"><path d="M3.7 0 L3.7 3.7 L0 3.7 Z" fill="#b8b8b8"/></svg>
<svg style="left:29.50px;top:266.00px" width="4" height="4"><path d="M3.7 0 L3.7 3.7 L0 3.7 Z" fill="#b8b8b8"/></svg>
<svg style="left:62.30px;top:266.00px" width="4" height="4"><path d="M3.7 0 L3.7 3.7 L0 3.7 Z" fill="#b8b8b8"/></svg>
<svg style="left:29.50px;top:292.30px" width="4" height="4"><path d="M3.7 0 L3.7 3.7 L0 3.7 Z" fill="#b8b8b8"/></svg>
<svg style="left:62.30px;top:292.30px" width="4" height="4"><path d="M3.7 0 L3.7 3.7 L0 3.7 Z" fill="#b8b8b8"/></svg>
<svg style="left:29.50px;top:318.30px" width="4" height="4"><path d="M3.7 0 L3.7 3.7 L0 3.7 Z" fill="#b8b8b8"/></svg>
<svg style="left:62.30px;top:318.30px" width="4" height="4"><path d="M3.7 0 L3.7 3.7 L0 3.7 Z" fill="#b8b8b8"/></svg>
<svg style="left:29.50px;top:344.80px" width="4" height="4"><path d="M3.7 0 L3.7 3.7 L0 3.7 Z" fill="#b8b8b8"/></svg>
<svg style="left:62.30px;top:344.80px" width="4" height="4"><path d="M3.7 0 L3.7 3.7 L0 3.7 Z" fill="#b8b8b8"/></svg>
<svg style="left:29.50px;top:371.00px" width="4" height="4"><path d="M3.7 0 L3.7 3.7 L0 3.7 Z" fill="#b8b8b8"/></svg>
<svg style="left:62.30px;top:371.00px" width="4" height="4"><path d="M3.7 0 L3.7 3.7 L0 3.7 Z" fill="#b8b8b8"/></svg>
<div class="r" style="left:29.00px;top:370.00px;width:5.00px;height:5.00px;background:#535353;"></div>
<svg style="left:11.00px;top:95.00px" width="18" height="18" viewBox="0 0 18 18"><g transform="translate(8.7,8.7)" fill="#dcdcdc"><rect x="-6" y="-0.7" width="12" height="1.4"/><rect x="-0.7" y="-6" width="1.4" height="12"/><path d="M0 -7.8 L2.6 -4.6 L-2.6 -4.6 Z M0 7.8 L2.6 4.6 L-2.6 4.6 Z M-7.8 0 L-4.6 -2.6 L-4.6 2.6 Z M7.8 0 L4.6 -2.6 L4.6 2.6 Z"/></g></svg>
<svg style="left:44.00px;top:95.00px" width="19" height="16" viewBox="0 0 19 16"><rect x="1.5" y="1.8" width="15.2" height="12.4" rx="1.2" fill="none" stroke="#dcdcdc" stroke-width="1.3" stroke-dasharray="3.3 1.9" stroke-dashoffset="1.2"/></svg>
<svg style="left:10.00px;top:120.00px" width="22" height="20" viewBox="0 0 22 20"><g fill="none" stroke="#dcdcdc" stroke-width="1.2"><ellipse cx="10.4" cy="8" rx="8" ry="5.2" transform="rotate(-14 10.4 8)"/><circle cx="5.6" cy="13.4" r="1.9"/><path d="M5 15 Q7.4 16 6.2 18.4"/></g></svg>
<svg style="left:0;top:0" width="72" height="659" viewBox="0 0 72 659"><ellipse cx="48.5" cy="129.9" rx="4.1" ry="6.4" fill="none" stroke="#dcdcdc" stroke-width="1.15" stroke-dasharray="1 1.02"/><path d="M55 126 L60 131 L58 136 L50 136 Z" fill="#535353"/><g fill="#dcdcdc"><path d="M61.9 121.5 L60.1 129.3 L57.2 127.3 Z"/><path d="M56.2 128 L59.5 130.4 Q59.3 134.7 51.3 134.9 Q53.3 133.2 53.6 131 Q54 128.7 56.2 128 Z"/></g></svg>
<svg style="left:9.00px;top:146.00px" width="22" height="19" viewBox="0 0 22 19"><g fill="none" stroke="#dcdcdc" stroke-width="1.5"><path d="M6.5 1.4 L6.5 13.6 L17.4 13.6"/><path d="M1.2 4.8 L15.3 4.8 L15.3 17.4"/><path d="M17.8 13.6 L20 13.6" stroke-dasharray="1.4 1"/></g></svg>
<svg style="left:0;top:0" width="72" height="659" viewBox="0 0 72 659"><g fill="none" stroke="#dcdcdc" stroke-width="1.1"><rect x="45.6" y="149.2" width="15.4" height="12.4"/><path d="M45.6 149.2 L61 161.6 M61 149.2 L45.6 161.6"/></g><g fill="#dcdcdc"><circle cx="45.6" cy="149.2" r="1.1"/><circle cx="61" cy="149.2" r="1.1"/><circle cx="45.6" cy="161.6" r="1.1"/><circle cx="61" cy="161.6" r="1.1"/></g></svg>
<svg style="left:11.00px;top:172.00px" width="19" height="19" viewBox="0 0 19 19"><g transform="rotate(45 9.5 9.5)"><rect x="7.6" y="7.6" width="3.8" height="10.4" rx="1.9" fill="none" stroke="#dcdcdc" stroke-width="1.1"/><rect x="6" y="5.4" width="7" height="3" fill="#dcdcdc"/><rect x="7.7" y="-0.6" width="3.6" height="6.4" rx="1.8" fill="#dcdcdc"/></g></svg>
<svg style="left:0;top:0" width="72" height="659" viewBox="0 0 72 659"><path d="M45.9 181.6 A4.8 4.8 0 0 1 52 175.4" fill="none" stroke="#dcdcdc" stroke-width="1.1" stroke-dasharray="1 1.05"/><g transform="rotate(-45.5 53.5 181.2)"><rect x="45.3" y="178.2" width="16.4" height="6" rx="1.3" fill="#dcdcdc"/><rect x="50.4" y="178.2" width="6.2" height="6" fill="#bdbdbd"/><path d="M51.2 178.2 V184.2 M53.5 178.2 V184.2 M55.8 178.2 V184.2" stroke="#4c4c4c" stroke-width="0.75"/></g></svg>
<svg style="left:0;top:0" width="72" height="659" viewBox="0 0 72 659"><g fill="#dcdcdc"><path d="M26.8 199.8 L27.9 200.5 L21.9 210 L18.9 207.6 Z"/><path d="M17.5 208.8 L20.4 211 Q20.2 215.3 12.7 215.6 Q14.3 214 14.6 212 Q15.1 209.5 17.5 208.8 Z"/></g></svg>
<svg style="left:45.00px;top:199.00px" width="16" height="18" viewBox="0 0 16 18"><g fill="#dcdcdc"><circle cx="7.8" cy="3.6" r="2.9"/><path d="M6.6 5.8 L9 5.8 L9.4 9.6 L13.6 9.6 L13.6 13 L2 13 L2 9.6 L6.2 9.6 Z"/><rect x="2" y="14" width="11.6" height="1.6"/></g></svg>
<svg style="left:0;top:0" width="72" height="659" viewBox="0 0 72 659"><g fill="none" stroke="#c4c4c4" stroke-width="1"><path d="M24.8 227 Q20.4 224.2 15.8 225.8 Q12.2 227.8 13.4 231 Q15 233.6 17.8 232.6 Q19.6 231.4 18.6 229.8 Q17.4 228.8 16.3 229.8 Q16 230.6 16.8 230.8"/><path d="M27.7 231.4 Q29 238.8 21 241.5"/></g><g fill="#dcdcdc" transform="translate(0.4,26.7)"><path d="M26.8 199.8 L27.9 200.5 L21.9 210 L18.9 207.6 Z"/><path d="M17.5 208.8 L20.4 211 Q20.2 215.3 12.7 215.6 Q14.3 214 14.6 212 Q15.1 209.5 17.5 208.8 Z"/></g></svg>
<svg style="left:44.00px;top:226.00px" width="19" height="17" viewBox="0 0 19 17"><path d="M10.4 1.2 L16 5.2 L9.4 12.4 L3.8 8.4 Z" fill="#dcdcdc"/><path d="M3.4 9 L1.6 11 L5.6 14 L7.4 14 L9 12.2" fill="none" stroke="#dcdcdc" stroke-width="1.1"/><path d="M5 14.2 L16.6 14.2" stroke="#dcdcdc" stroke-width="1.1"/></svg>
<div class="r" style="left:12.1px;top:253px;width:15.9px;height:13.1px;border:1.2px solid #dcdcdc;border-radius:1px;box-sizing:border-box;background:linear-gradient(90deg,#2c2c2c,#c8c8c8);"></div>
<svg style="left:0;top:0" width="72" height="659" viewBox="0 0 72 659"><path d="M48.6 252.2 Q53 251.6 58.6 252.2 Q59.6 252.4 59.5 254 L59.4 259.6 Q59.2 262.4 57.2 263.4 Q55.6 263.8 54.8 262.8 L54.2 263.4 Q53.2 264 52.2 263.2 L49.6 266.6 Q48.2 268 47 266.8 Q46.2 265.8 47.2 264.4 L50.6 259.4 Q48.2 259.6 47.6 257.6 Q47 254 48.6 252.2 Z" fill="#dcdcdc"/><path d="M52 258.4 L50.6 261.2 M56.3 258.6 L54.9 262.2" stroke="#535353" stroke-width="0.8" fill="none"/></svg>
<svg style="left:11.00px;top:277.00px" width="19" height="19" viewBox="0 0 19 19"><circle cx="11.2" cy="6.6" r="5" fill="#dcdcdc"/><path d="M8 10.4 L1.8 16.8" stroke="#dcdcdc" stroke-width="1.8" stroke-linecap="round"/></svg>
<svg style="left:0;top:0" width="72" height="659" viewBox="0 0 72 659"><g transform="translate(52.6 286.8) rotate(45)"><path d="M-2.5 -5 L2.5 -5 Q4.6 -1 3.6 1.6 L0 8 L-3.6 1.6 Q-4.6 -1 -2.5 -5 Z" fill="none" stroke="#dcdcdc" stroke-width="1.05"/><rect x="-3.1" y="-8.8" width="6.2" height="3.1" fill="#dcdcdc"/><circle cx="0" cy="0.4" r="1.15" fill="#dcdcdc"/><path d="M0 1 L0 7.4" stroke="#dcdcdc" stroke-width="0.9"/></g></svg>
<svg style="left:0;top:0" width="72" height="659" viewBox="0 0 72 659"><path d="M13.7 306.2 H27.4 V309.4 H26.3 Q26.2 307.6 24.6 307.6 H21.6 V317.2 Q21.6 318.2 24.2 318.3 V319.3 H16.3 V318.3 Q19.4 318.2 19.4 317.2 V307.6 H16.5 Q14.9 307.6 14.8 309.4 H13.7 Z" fill="#dcdcdc"/></svg>
<svg style="left:46.00px;top:303.00px" width="14" height="19" viewBox="0 0 14 19"><path d="M2 1.6 L2 15.2 L5.4 12 L7.8 17 L9.8 16 L7.4 11.2 L12 11 Z" fill="#dcdcdc"/></svg>
<svg style="left:11.00px;top:331.00px" width="18" height="17" viewBox="0 0 18 17"><path d="M5 1 L12.4 1 L16 7.4 L12.4 13.8 L5 13.8 L1.4 7.4 Z" fill="#575757" stroke="#dcdcdc" stroke-width="1"/></svg>
<svg style="left:0;top:0" width="72" height="659" viewBox="0 0 72 659"><path d="M47.2 333.8 Q51.6 328.6 57.8 331.6" fill="none" stroke="#c8c8c8" stroke-width="1.05"/><path d="M58.6 329.7 L61.9 333.7 L56.6 333.3 Z" fill="#dcdcdc"/><path d="M52.7 332.9 L60.8 339.7 L55.4 345.6 L51 341.6 Z" fill="#d0d0d0"/><g fill="#efefef" stroke="#535353" stroke-width="0.45"><path d="M44.7 340.8 Q45.4 339.8 46.4 340.6 L48 342.2 L48 344 Q50 347 53.4 346.4 L47.6 346 Q45.8 344 44.7 340.8 Z"/><rect x="47" y="337.8" width="1.8" height="6" rx="0.9"/><rect x="49.1" y="336.2" width="1.8" height="7" rx="0.9"/><rect x="51.2" y="336.6" width="1.8" height="7" rx="0.9"/><rect x="53.3" y="338.4" width="1.8" height="6" rx="0.9"/></g><path d="M47 342 H55.1 V343.6 Q54.8 346.8 51 346.9 Q47.6 346.6 46.6 343.4 Z" fill="#efefef"/></svg>
<svg style="left:10.00px;top:355.00px" width="20" height="20" viewBox="0 0 20 20"><circle cx="8" cy="7.8" r="5.6" fill="none" stroke="#dcdcdc" stroke-width="1.2"/><path d="M5.6 5 Q8 3.4 10.2 5.4" fill="none" stroke="#dcdcdc" stroke-width="0.9"/><path d="M12.2 12 L17.2 17" stroke="#dcdcdc" stroke-width="1.9" stroke-linecap="round"/></svg>
<svg style="left:0;top:0" width="72" height="659" viewBox="0 0 72 659"><g fill="#dcdcdc"><circle cx="46.8" cy="365" r="1.9"/><circle cx="52.8" cy="365" r="1.9"/><circle cx="58.7" cy="365" r="1.9"/></g></svg>
<div class="r" style="left:33.6px;top:402.4px;width:24.5px;height:24.6px;box-sizing:border-box;border:1.3px solid #efefef;background:#4090fe;border-radius:1px;box-shadow:0 0 1.5px rgba(0,0,0,0.5);"></div>
<div class="r" style="left:18.7px;top:386.2px;width:24.6px;height:24.3px;box-sizing:border-box;border:1.3px solid #f4f4f4;background:#000;border-radius:1px;box-shadow:0 0 1.5px rgba(0,0,0,0.6);"></div>
<svg style="left:50.00px;top:385.00px" width="12" height="12" viewBox="0 0 12 12"><path d="M3 3.4 L8.2 3.4 L8.2 8.6" fill="none" stroke="#dcdcdc" stroke-width="1.2"/><path d="M0.8 3.4 L3.8 1 L3.8 5.8 Z M8.2 11 L5.8 8 L10.6 8 Z" fill="#dcdcdc"/></svg>
<div class="r" style="left:22.40px;top:422.90px;width:6.50px;height:6.90px;background:#e6e6e6;"></div>
<div class="r" style="left:18.4px;top:419.6px;width:7.2px;height:7.4px;box-sizing:border-box;border:1.1px solid #d0d0d0;background:#111;"></div>
<svg style="left:10.00px;top:440.00px" width="19" height="15" viewBox="0 0 19 15"><rect x="1.4" y="1.5" width="16.2" height="11.8" fill="none" stroke="#dcdcdc" stroke-width="1.1"/><circle cx="9.6" cy="7.4" r="4.2" fill="none" stroke="#dcdcdc" stroke-width="0.9" stroke-dasharray="1 1"/></svg>
<svg style="left:43.00px;top:439.00px" width="20" height="15" viewBox="0 0 20 15"><rect x="1.7" y="4.8" width="11.2" height="8.6" fill="#535353" stroke="#dcdcdc" stroke-width="1.1"/><rect x="6.6" y="1.6" width="11.6" height="8.6" fill="#535353" stroke="#dcdcdc" stroke-width="1.1"/></svg>
<svg style="left:62.50px;top:453.40px" width="4" height="4"><path d="M3.7 0 L3.7 3.7 L0 3.7 Z" fill="#b8b8b8"/></svg>
<div class="r" style="left:946.20px;top:578.80px;width:68.60px;height:31.40px;background:#1b1b1b;border-radius:3.5px;"></div>
<div class="t" style="left:952.20px;top:578.43px;font-size:10.60px;color:#e2e2e2;transform:scaleX(1.0067);">W :</div>
<div class="t" style="left:973.60px;top:578.43px;font-size:10.60px;color:#e2e2e2;transform:scaleX(0.9597);">4268 px</div>
<div class="t" style="left:954.80px;top:590.03px;font-size:10.60px;color:#e2e2e2;transform:scaleX(0.9893);">H :</div>
<div class="t" style="left:973.60px;top:590.03px;font-size:10.60px;color:#e2e2e2;transform:scaleX(0.9597);">4268 px</div>
<svg style="left:916.10px;top:612.50px" width="28" height="28" viewBox="-14 -14 28 28"><rect x="3.4" y="-1.7" width="9.4" height="3.4" rx="1.7" transform="rotate(0)" fill="#2a2a2a" stroke="#d8d8d8" stroke-width="0.8"/><rect x="3.4" y="-1.7" width="9.4" height="3.4" rx="1.7" transform="rotate(90)" fill="#2a2a2a" stroke="#d8d8d8" stroke-width="0.8"/><rect x="3.4" y="-1.7" width="9.4" height="3.4" rx="1.7" transform="rotate(180)" fill="#2a2a2a" stroke="#d8d8d8" stroke-width="0.8"/><rect x="3.4" y="-1.7" width="9.4" height="3.4" rx="1.7" transform="rotate(270)" fill="#2a2a2a" stroke="#d8d8d8" stroke-width="0.8"/><circle r="1.1" fill="none" stroke="#cfd8e8" stroke-width="0.7"/></svg>
<svg style="left:93px;top:109px;" width="913" height="550" viewBox="93 109 913 550"><ellipse cx="523.8" cy="374.6" rx="19.6" ry="25.8" fill="none" stroke="#e6000a" stroke-width="6"/><polygon points="548.51,381.98 948.11,613.81 951.30,607.90 964.00,628.20 939.80,627.80 943.73,621.22 547.89,383.02" fill="#e80000" stroke="#e80000" stroke-width="0.6" stroke-linejoin="round"/></svg>
</body></html>
